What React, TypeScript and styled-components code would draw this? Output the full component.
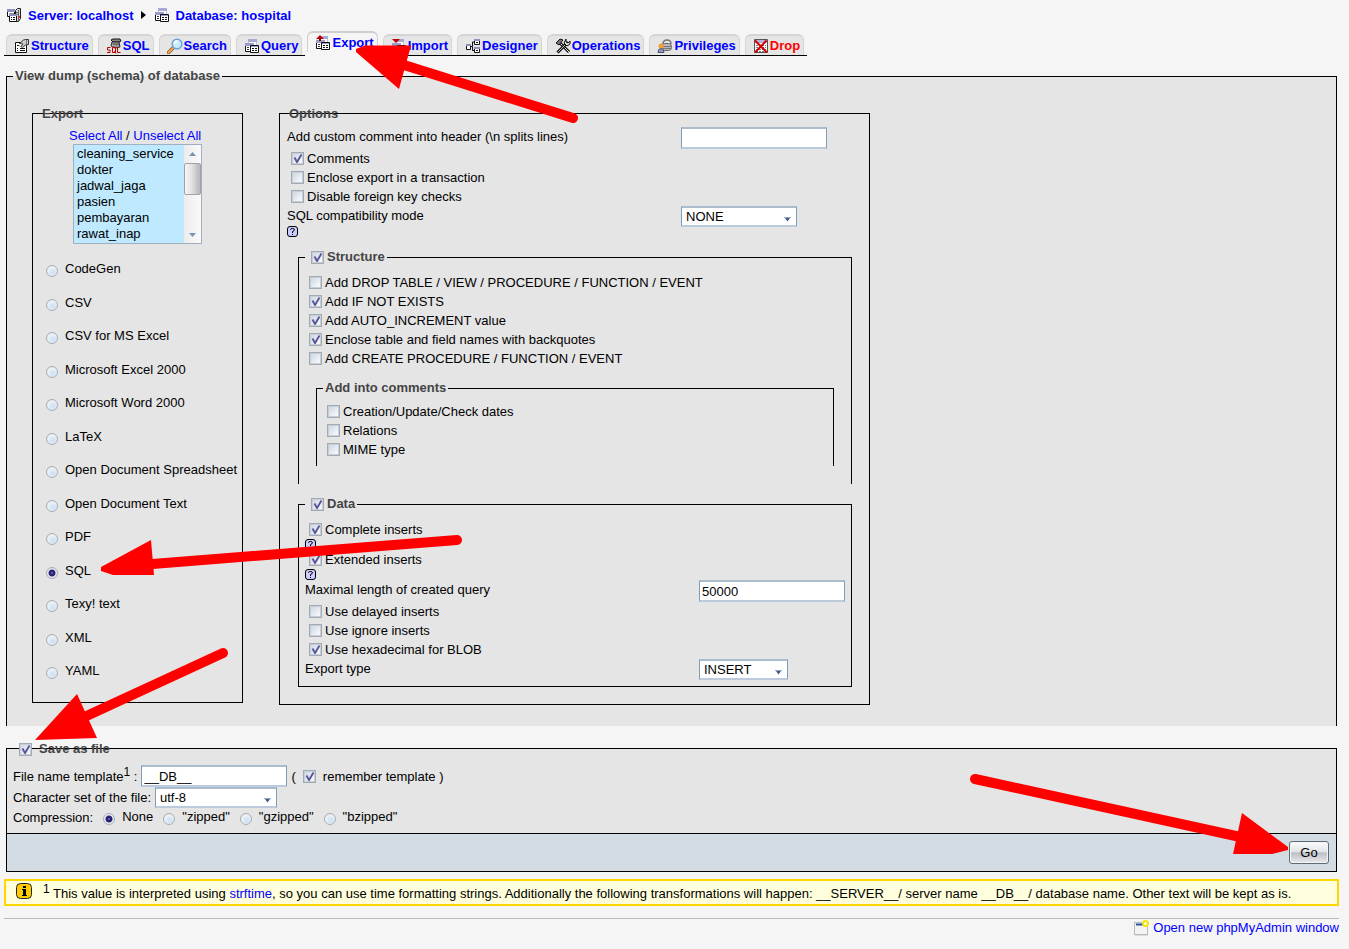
import React from "react";
import styled, { createGlobalStyle, css } from "styled-components";

const font = `"Liberation Sans", Arial, sans-serif`;

const GlobalStyle = createGlobalStyle`
  *, *::before, *::after { box-sizing: border-box; }
  body {
    margin: 0;
    background: #f5f5f5;
    color: #000;
    font: 13px/19px ${font};
  }
  a { color: #0000ff; text-decoration: none; }
  a:hover { text-decoration: underline; }
`;

const Page = styled.div`
  position: relative;
  padding: 5px 10px 12px 4px;
`;

/* ---------- header ---------- */

const Breadcrumb = styled.nav`
  display: flex;
  align-items: center;
  height: 20px;
  padding-left: 2px;
  font-weight: bold;
  a { display: flex; align-items: center; gap: 6px; }
`;

const Separator = styled.span`
  width: 0;
  margin: 0 8px 0 7px;
  border: solid transparent;
  border-width: 4px 0 4px 5px;
  border-left-color: #000;
`;

const Tabs = styled.ul`
  display: flex;
  align-items: flex-end;
  width: max-content;
  height: 25px;
  margin: 6px 0 11px;
  padding: 0;
  list-style: none;
`;

const TabItem = styled.li<{ $active?: boolean }>`
  height: 25px;
  padding: ${(p) => (p.$active ? "0 3px 0 2px" : "3px 3px 0 2px")};
  border-bottom: 1px solid ${(p) => (p.$active ? "transparent" : "#000")};
`;

const TabLink = styled.a<{ $danger?: boolean; $active?: boolean }>`
  display: flex;
  align-items: center;
  gap: 1px;
  height: 21px;
  padding: 0 3px 1px 7px;
  border: 2px solid #d5d5d5;
  border-width: 2px 1px 0;
  border-color: ${(p) => (p.$active ? "#cfcfcf" : "#d5d5d5")};
  border-radius: 6px 6px 0 0;
  background: ${(p) => (p.$active ? "#f5f5f5" : "#e5e5e5")};
  font-weight: bold;
  svg { margin-top: 2px; }
  && { color: ${(p) => (p.$danger ? "#ff0000" : "#0000ff")}; }
`;

/* ---------- fieldsets ---------- */

const Fieldset = styled.fieldset<{ $open?: boolean }>`
  position: relative;
  min-width: 0;
  margin: 0;
  padding: 0;
  border: 1px solid #000;
  ${(p) => p.$open && css`border-bottom: 0;`}
  background: #e5e5e5;
`;

const legendText = css`
  padding: 0 2px;
  color: #444;
  font-weight: bold;
  line-height: 18px;
`;

const Legend = styled.legend`
  ${legendText}
`;

const MainLegend = styled(Legend)`
  margin-left: 6px;
`;

const CheckLegend = styled(Legend)`
  padding-left: 6px;
  label { display: flex; align-items: center; gap: 3px; }
`;

/* Title drawn over an unbroken border line. */
const OverLegend = styled.legend`
  ${legendText}
  position: absolute;
  top: -9px;
  left: 7px;
`;

const OverCheckLegend = styled(OverLegend)`
  left: 10px;
  label { display: flex; align-items: center; gap: 7px; }
`;

const MainFieldset = styled(Fieldset)`
  margin: 0 2px;
`;

const MainColumns = styled.div`
  display: flex;
  align-items: flex-start;
  gap: 36px;
  padding: 28px 0 21px 25px;
`;

const ExportFieldset = styled(Fieldset)`
  width: 211px;
  padding: 13px 0 23px;
`;

const OptionsFieldset = styled(Fieldset)`
  width: 591px;
  padding: 13px 17px 17px 18px;
`;

const SubFieldset = styled(Fieldset)`
  margin-top: 11px;
  padding: 7px 6px 6px;
  background: none;
`;

const StructureFieldset = styled(SubFieldset)`
  padding-bottom: 18px;
`;

const CommentsFieldset = styled(SubFieldset)`
  margin: 11px 11px 0;
  padding: 5px 6px 7px;
`;

/* ---------- controls ---------- */

const Check = styled.input.attrs({ type: "checkbox" })`
  appearance: none;
  flex: none;
  width: 13px;
  height: 13px;
  margin: 0;
  border: 1px solid #a2abb4;
  outline: 1px solid #c6cfd8;
  outline-offset: -2px;
  background: linear-gradient(135deg, #d3dae4 15%, #f6f8fb 85%);
  &:checked {
    background:
      url("data:image/svg+xml,%3Csvg xmlns='http://www.w3.org/2000/svg' viewBox='0 0 11 11'%3E%3Cpath d='M2.5 4.5L5 9L9.5 1.5' fill='none' stroke='%235c5599' stroke-width='1.9'/%3E%3C/svg%3E") center / 11px 11px,
      linear-gradient(135deg, #d3dae4 15%, #f6f8fb 85%);
  }
`;

const Radio = styled.input.attrs({ type: "radio" })`
  appearance: none;
  flex: none;
  width: 12px;
  height: 12px;
  margin: 0;
  border: 1px solid #a9afb6;
  border-radius: 50%;
  background: radial-gradient(circle at 60% 65%, #d2e4f5 20%, #eef2f6 60%, #ccd2d8 100%);
  &:checked {
    background: radial-gradient(circle at 50% 50%, #8f8fd0 0, #2b2277 20%, #2b2277 42%, #e9edf2 56%, #d5dae0 100%);
  }
`;

const field = css`
  margin: 0;
  border: 1px solid #7f9db9;
  border-top: 2px solid #abbccc;
  border-bottom: 2px solid #bccbdc;
  border-radius: 0;
  background-color: #fff;
  color: #000;
  font: 13px/17px ${font};
`;

const TextBox = styled.input.attrs({ type: "text" })`
  ${field}
  width: 146px;
  height: 22px;
  padding: 0 2px;
`;

const Dropdown = styled.select<{ $width: number }>`
  ${field}
  appearance: none;
  width: ${(p) => p.$width}px;
  height: 21px;
  padding: 0 18px 0 4px;
  background: #fff url("data:image/svg+xml,%3Csvg xmlns='http://www.w3.org/2000/svg' viewBox='0 0 7 5'%3E%3Cpath d='M0 0.5H7' stroke='%239aa9bf'/%3E%3Cpath d='M1 1H6L3.5 4.5Z' fill='%233c5a8c'/%3E%3C/svg%3E") no-repeat right 5px bottom 3px / 7px 5px;
`;

const ListBox = styled.div`
  display: flex;
  width: 129px;
  height: 100px;
  margin-left: 40px;
  border: 1px solid #9fb0c1;
  background: #bfe9ff;
`;

const TableList = styled.select`
  flex: 1;
  min-width: 0;
  height: 98px;
  margin: 0;
  padding: 1px 0 0;
  overflow: hidden;
  border: 0;
  border-radius: 0;
  background: #bfe9ff;
  font: 13px/16px ${font};
  outline: none;
  option {
    min-height: 16px;
    padding: 0 3px;
    color: #000;
  }
  option:checked { background: #bfe9ff linear-gradient(#bfe9ff, #bfe9ff); color: #000; }
`;

const ScrollBar = styled.div`
  display: flex;
  flex-direction: column;
  width: 17px;
  background: linear-gradient(90deg, #ececec, #fafafa);
  svg { display: block; flex: none; }
`;

const ScrollThumb = styled.div`
  flex: none;
  height: 32px;
  margin-bottom: auto;
  border: 1px solid #a2a2a2;
  border-radius: 2px;
  background: linear-gradient(90deg, #f6f6f6 0, #e2e2e4 45%, #bcbcc2 90%);
`;

const SelectLinks = styled.div`
  padding-left: 36px;
  line-height: 17px;
`;

const FormatList = styled.div`
  display: flex;
  flex-direction: column;
  justify-content: space-between;
  height: 418px;
  margin-top: 17px;
  padding-left: 13px;
`;

const RadioLabel = styled.label`
  display: flex;
  align-items: center;
  gap: 7px;
  line-height: 16px;
  white-space: nowrap;
  input { margin-top: 4px; }
`;

const CheckRow = styled.label`
  display: flex;
  align-items: center;
  gap: 3px;
  width: max-content;
  margin-left: 4px;
  line-height: 19px;
`;

const FieldRow = styled.div`
  display: flex;
  align-items: flex-start;
`;

const FieldLabel = styled.div`
  flex: 0 0 394px;
  label { display: block; line-height: 19px; }
  a { margin-top: 1px; }
`;

const OptionsTop = styled.div`
  margin-left: -11px;
`;

const HelpLink = styled.a`
  display: block;
  width: 11px;
  height: 11px;
  svg { display: block; }
`;

/* ---------- save section ---------- */

const SaveFieldset = styled(Fieldset)`
  margin: 22px 2px 0;
  padding: 16px 6px 7px;
`;

const SaveRow = styled.div<{ $height: number }>`
  display: flex;
  align-items: center;
  height: ${(p) => p.$height}px;
  gap: 4px;
  sup { font-size: 12px; line-height: 0; vertical-align: 5px; }
`;

const Remember = styled.label`
  display: flex;
  align-items: center;
  gap: 7px;
`;

const Compression = styled(RadioLabel)`
  margin-left: 6px;
`;

const ActionBar = styled.div`
  display: flex;
  justify-content: flex-end;
  margin: -1px 2px 0;
  padding: 7px;
  border: 1px solid #000;
  background: #d3dce3;
`;

const GoButton = styled.button`
  width: 40px;
  height: 23px;
  padding: 0;
  border: 1px solid #5f6b76;
  border-radius: 3px;
  background: linear-gradient(#fbfbfb 0, #e3e5e8 45%, #bcc0c6 52%, #e9eaec 100%);
  box-shadow: inset 0 0 0 1px #f4f4f4;
  color: #000;
  font: 13px/19px ${font};
`;

const Notice = styled.div`
  display: flex;
  align-items: flex-start;
  min-height: 25px;
  margin-top: 7px;
  padding: 1px 10px;
  border: 2px solid #ffd700;
  background: #ffffdd;
  gap: 11px;
  p { margin: 3px 0 0; line-height: 18px; }
  sup { font-size: 12px; line-height: 0; vertical-align: 5px; }
  svg { flex: none; margin-top: 1px; }
`;

const Footer = styled.footer`
  display: flex;
  justify-content: flex-end;
  margin-top: 12px;
  border-top: 1px solid #bbb;
  a { display: flex; align-items: center; gap: 4px; line-height: 18px; }
`;

const ArrowLayer = styled.svg<{ $x: number; $y: number; $fromRight?: boolean }>`
  position: absolute;
  top: ${(p) => p.$y}px;
  ${(p) => (p.$fromRight ? "right" : "left")}: ${(p) => p.$x}px;
  fill: #ff0000;
  stroke: none;
  pointer-events: none;
  line { stroke: #ff0000; stroke-width: 10; stroke-linecap: round; }
`;

/* ---------- icons ---------- */

const Icon = ({ children }: { children: React.ReactNode }) => (
  <svg width={16} height={16} viewBox="0 0 16 16" aria-hidden="true">
    {children}
  </svg>
);

const Sheets = () => (
  <>
    <path d="M4.500 1.500h8v8h-8z" fill="#fff" stroke="#c4c4d4" />
    <path d="M4 1h9v3h-9z" fill="#a9a9d6" />
    <path d="M1.500 6v7.500h8V6z" fill="#fff" stroke="#111" />
    <path d="M1 5h9v3h-9z" fill="#9c9ccb" />
    <path d="M3 9.500h2M3 11.500h2" stroke="#333" />
    <path d="M6.500 7.500h8v7h-8z" fill="#fff" stroke="#111" />
    <path d="M7 8h7v1h-7z" fill="#9c9ccb" />
    <path d="M8 10.500h2M11 10.500h2M8 12.500h2M11 12.500h2" stroke="#111" />
  </>
);

const ServerIcon = () => (
  <Icon>
    <path d="M9.500 3.500l2-2h3v10l-2 3h-3z" fill="#d4d4d4" stroke="#222" />
    <path d="M12.500 3v11M10 5.500h2M10 7.500h2" stroke="#666" />
    <path d="M12 9h2v2h-2z" fill="#c33" />
    <path d="M1.500 3v6.500h7V3z" fill="#fff" stroke="#111" />
    <path d="M1 2h8v3h-8z" fill="#9090c0" />
    <path d="M3.500 7v7.500h7V7z" fill="#fff" stroke="#111" />
    <path d="M3 7h8v2h-8z" fill="#9090c0" />
    <path d="M5 10.500h1M7 10.500h2M5 12.500h1M7 12.500h2" stroke="#111" />
  </Icon>
);
const DatabaseIcon = () => <Icon><Sheets /></Icon>;
const StructureIcon = () => (
  <Icon>
    <path d="M1.500 4.500h11v10h-11z" fill="#fff" stroke="#111" />
    <path d="M3 7.500h2l1 1M3 10.500h1M6 10.500h5M3 12.500h1M6 12.500h5" fill="none" stroke="#111" />
    <path d="M5.500 5.500l4-3.500 2-.5h3v5l-3 .5-3 2.500-1.500-1 2-2.500z" fill="#ccc" stroke="#333" />
    <path d="M12.500 2v4" stroke="#777" />
  </Icon>
);
const SqlIcon = () => (
  <Icon>
    <path d="M5 2l2-1h7l1 2-2 1h-6z" fill="#888" stroke="#111" />
    <path d="M6 4l-1 4 4 2 5-1-1-5z" fill="#d8d8d8" stroke="#222" />
    <path d="M8 4v5M10 4v5M12 4v5M6 6h7" stroke="#555" />
    <path d="M4.500 9.500h-3v2.500h2.500v2.500h-3M6.500 9.500h3v5h-3zM8.500 13l1.500 2.500M11.500 9v5.500h3" fill="none" stroke="#c00000" />
  </Icon>
);
const SearchIcon = () => (
  <Icon>
    <path d="M6 10L1.500 14.500" stroke="#8b5a1c" strokeWidth="3.500" strokeLinecap="round" />
    <path d="M6 10L1.500 14.500" stroke="#f0a860" strokeWidth="2" strokeLinecap="round" />
    <circle cx="10" cy="6" r="4.800" fill="#c9ecff" stroke="#6ba0d8" strokeWidth="1.500" />
    <path d="M7.500 6q0-3 3-3" fill="none" stroke="#fff" strokeWidth="1.500" />
  </Icon>
);
const ExportIcon = () => <Icon><Sheets /><path d="M5 0l4 4h-8z" fill="#c00000" /><path d="M4 4h2v2h-2z" fill="#800" /></Icon>;
const ImportIcon = () => <Icon><Sheets /><path d="M1 1h8l-4 4z" fill="#c00000" /></Icon>;
const DesignerIcon = () => (
  <Icon>
    <path d="M1.500 6.500h4v5h-4zM9.500 1.500h5v5h-5zM9.500 9.500h5v5h-5z" fill="#fff" stroke="#111" />
    <path d="M1 6h5v2h-5zM9 1h6v2h-6zM9 9h6v2h-6z" fill="#9090c0" />
    <path d="M6 8.500h1.500v-4.500h2M7.500 8.500v4h2M11 4.500h2M11 12.500h2" fill="none" stroke="#111" />
  </Icon>
);
const OperationsIcon = () => (
  <Icon>
    <path d="M4 4l10 10" stroke="#111" strokeWidth="3" />
    <path d="M4 4l10 10" stroke="#ddd" />
    <path d="M13 4L2.500 14.500" stroke="#111" strokeWidth="3" />
    <path d="M12 5L3 14" stroke="#bbb" />
    <path d="M1 5l4-4 3 1-4 5z" fill="#777" stroke="#111" />
    <path d="M11 1v3l2 1 2-2v3l-3 2-3-3z" fill="#ddd" stroke="#111" />
  </Icon>
);
const PrivilegesIcon = () => (
  <Icon>
    <path d="M6 6q0-4 4-4t4 4" fill="none" stroke="#777" strokeWidth="1.500" />
    <rect x="4.500" y="5.500" width="10" height="7" rx="3" fill="#b9b9b9" stroke="#666" />
    <path d="M6 8.500h8M6 10.500h8" stroke="#777" />
    <circle cx="4" cy="8" r="2.500" fill="#f5a030" />
    <path d="M1 14.500q0-4 3-4t3 4z" fill="#8c9cc8" stroke="#556" />
  </Icon>
);
const DropIcon = () => (
  <Icon>
    <path d="M1.500 1.500h13v13h-13z" fill="#fff" stroke="#555" />
    <path d="M2 2h12v3h-12z" fill="#b4b4d8" />
    <path d="M3 7.500h10M3 9.500h10M3 11.500h10M3 13.500h10" stroke="#777" strokeDasharray="2 1" />
    <path d="M2 2.500L14 14.500M13.500 2.500L2 14.500" stroke="#d00000" strokeWidth="2" />
  </Icon>
);
const WindowIcon = () => (
  <Icon>
    <rect x="1.500" y="2.500" width="13" height="12" fill="#f3f3f3" stroke="#bbb" />
    <path d="M3 4.500h8" stroke="#2b4f95" strokeWidth="2" />
    <path d="M2 15.500h13" stroke="#ddd" />
    <circle cx="12.500" cy="3.500" r="2.500" fill="#fff" stroke="#f5e500" strokeWidth="2" />
  </Icon>
);
const InfoIcon = () => (
  <Icon>
    <rect x=".5" y=".5" width="15" height="15" rx="4" fill="#ffcc00" stroke="#222" />
    <path d="M7 3h3v2h-3zM6 6h4v6h1v1h-5v-1h1v-5h-1z" fill="#000" />
  </Icon>
);

const Help = () => (
  <HelpLink href="#help" aria-label="Documentation">
    <svg width="11" height="11" viewBox="0 0 11 11">
      <rect x=".5" y=".5" width="10" height="10" rx="2.500" fill="#ccccff" stroke="#000" />
      <path d="M3.500 4V3.500Q3.500 2.500 5.500 2.500T7.500 3.800Q7.500 4.800 5.500 5.500V7M5.500 8v1" fill="none" stroke="#000" />
    </svg>
  </HelpLink>
);

/* ---------- data ---------- */

const tabs = [
  { name: "Structure", icon: <StructureIcon /> },
  { name: "SQL", icon: <SqlIcon /> },
  { name: "Search", icon: <SearchIcon /> },
  { name: "Query", icon: <DatabaseIcon /> },
  { name: "Export", icon: <ExportIcon />, active: true },
  { name: "Import", icon: <ImportIcon /> },
  { name: "Designer", icon: <DesignerIcon /> },
  { name: "Operations", icon: <OperationsIcon /> },
  { name: "Privileges", icon: <PrivilegesIcon /> },
  { name: "Drop", icon: <DropIcon />, danger: true },
];

const tables = ["cleaning_service", "dokter", "jadwal_jaga", "pasien", "pembayaran", "rawat_inap"];

const formats = [
  "CodeGen", "CSV", "CSV for MS Excel", "Microsoft Excel 2000", "Microsoft Word 2000", "LaTeX",
  "Open Document Spreadsheet", "Open Document Text", "PDF", "SQL", "Texy! text", "XML", "YAML",
];

const Option = ({ children, on }: { children: React.ReactNode; on?: boolean }) => (
  <CheckRow>
    <Check defaultChecked={on} />
    {children}
  </CheckRow>
);

export default function App() {
  return (
    <Page>
      <GlobalStyle />
      <Breadcrumb>
        <a href="#server"><ServerIcon />Server: localhost</a>
        <Separator />
        <a href="#database"><DatabaseIcon />Database: hospital</a>
      </Breadcrumb>

      <Tabs>
        {tabs.map((t) => (
          <TabItem key={t.name} $active={t.active}>
            <TabLink href={`#${t.name}`} $active={t.active} $danger={t.danger}>
              {t.icon}
              {t.name}
            </TabLink>
          </TabItem>
        ))}
      </Tabs>

      <form onSubmit={(e) => e.preventDefault()}>
        <MainFieldset $open>
          <MainLegend>View dump (schema) of database</MainLegend>
          <MainColumns>
            <ExportFieldset>
              <OverLegend>Export</OverLegend>
              <SelectLinks>
                <a href="#all">Select All</a> / <a href="#none">Unselect All</a>
              </SelectLinks>
              <ListBox>
                <TableList multiple aria-label="Tables" defaultValue={tables}>
                  {tables.map((t) => <option key={t}>{t}</option>)}
                </TableList>
                <ScrollBar aria-hidden="true">
                  <svg width="17" height="18" viewBox="0 0 17 18"><path d="M5 11L8.500 7L12 11Z" fill="#7394b4" /></svg>
                  <ScrollThumb />
                  <svg width="17" height="17" viewBox="0 0 17 17"><path d="M5 7L8.500 11L12 7Z" fill="#7394b4" /></svg>
                </ScrollBar>
              </ListBox>
              <FormatList>
                {formats.map((f) => (
                  <RadioLabel key={f}>
                    <Radio name="format" defaultChecked={f === "SQL"} />
                    {f}
                  </RadioLabel>
                ))}
              </FormatList>
            </ExportFieldset>

            <OptionsFieldset>
              <OverLegend>Options</OverLegend>
              <OptionsTop>
                <FieldRow>
                  <FieldLabel>
                    <label htmlFor="header">Add custom comment into header (\n splits lines)</label>
                  </FieldLabel>
                  <TextBox id="header" />
                </FieldRow>
                <Option on>Comments</Option>
                <Option>Enclose export in a transaction</Option>
                <Option>Disable foreign key checks</Option>
                <FieldRow>
                  <FieldLabel>
                    <label htmlFor="compat">SQL compatibility mode</label>
                    <Help />
                  </FieldLabel>
                  <Dropdown id="compat" $width={116}><option>NONE</option></Dropdown>
                </FieldRow>
              </OptionsTop>

              <StructureFieldset $open>
                <CheckLegend><label><Check defaultChecked />Structure</label></CheckLegend>
                <Option>Add DROP TABLE / VIEW / PROCEDURE / FUNCTION / EVENT</Option>
                <Option on>Add IF NOT EXISTS</Option>
                <Option on>Add AUTO_INCREMENT value</Option>
                <Option on>Enclose table and field names with backquotes</Option>
                <Option>Add CREATE PROCEDURE / FUNCTION / EVENT</Option>
                <CommentsFieldset $open>
                  <Legend>Add into comments</Legend>
                  <Option>Creation/Update/Check dates</Option>
                  <Option>Relations</Option>
                  <Option>MIME type</Option>
                </CommentsFieldset>
              </StructureFieldset>

              <SubFieldset>
                <CheckLegend><label><Check defaultChecked />Data</label></CheckLegend>
                <Option on>Complete inserts</Option>
                <Help />
                <Option on>Extended inserts</Option>
                <Help />
                <FieldRow>
                  <FieldLabel>
                    <label htmlFor="maxlen">Maximal length of created query</label>
                  </FieldLabel>
                  <TextBox id="maxlen" defaultValue="50000" />
                </FieldRow>
                <Option>Use delayed inserts</Option>
                <Option>Use ignore inserts</Option>
                <Option on>Use hexadecimal for BLOB</Option>
                <FieldRow>
                  <FieldLabel><label htmlFor="type">Export type</label></FieldLabel>
                  <Dropdown id="type" $width={89}><option>INSERT</option></Dropdown>
                </FieldRow>
              </SubFieldset>
            </OptionsFieldset>
          </MainColumns>
        </MainFieldset>

        <SaveFieldset>
          <OverCheckLegend><label><Check defaultChecked />Save as file</label></OverCheckLegend>
          <SaveRow $height={22}>
            <label htmlFor="template">File name template<sup>1</sup> :</label>
            <TextBox id="template" defaultValue="__DB__" />
            <Remember>( <Check defaultChecked />remember template )</Remember>
          </SaveRow>
          <SaveRow $height={21}>
            <label htmlFor="charset">Character set of the file:</label>
            <Dropdown id="charset" $width={122}><option>utf-8</option></Dropdown>
          </SaveRow>
          <SaveRow $height={18}>
            Compression:
            <Compression><Radio name="zip" defaultChecked />None</Compression>
            <Compression><Radio name="zip" />"zipped"</Compression>
            <Compression><Radio name="zip" />"gzipped"</Compression>
            <Compression><Radio name="zip" />"bzipped"</Compression>
          </SaveRow>
        </SaveFieldset>
        <ActionBar><GoButton type="submit">Go</GoButton></ActionBar>
      </form>

      <Notice>
        <InfoIcon />
        <p>
          <sup>1</sup> This value is interpreted using <a href="#strftime">strftime</a>, so you can use time formatting
          strings. Additionally the following transformations will happen: __SERVER__/ server name __DB__/ database
          name. Other text will be kept as is.
        </p>
      </Notice>

      <Footer>
        <a href="#new"><WindowIcon />Open new phpMyAdmin window</a>
      </Footer>

      <ArrowLayer $x={350} $y={40} width="232" height="90" viewBox="350 40 232 90" aria-hidden="true">
        <path d="M356 49L365 45.500H411L399 89L356 52Z" />
        <line x1="404" y1="65" x2="573" y2="118" />
      </ArrowLayer>
      <ArrowLayer $x={95} $y={530} width="375" height="50" viewBox="95 530 375 50" aria-hidden="true">
        <path d="M101 567L151 540L154 575H113L101 571Z" />
        <line x1="140" y1="565" x2="457" y2="540" />
      </ArrowLayer>
      <ArrowLayer $x={30} $y={640} width="205" height="105" viewBox="30 640 205 105" aria-hidden="true">
        <path d="M35 740L77 694L97 738Z" />
        <line x1="80" y1="719" x2="223" y2="653" />
      </ArrowLayer>
      <ArrowLayer $x={59} $y={770} $fromRight width="325" height="90" viewBox="965 770 325 90" aria-hidden="true">
        <path d="M1288 847L1242 813L1233 854H1272L1288 850Z" />
        <line x1="975" y1="779" x2="1245" y2="838" />
      </ArrowLayer>
    </Page>
  );
}
